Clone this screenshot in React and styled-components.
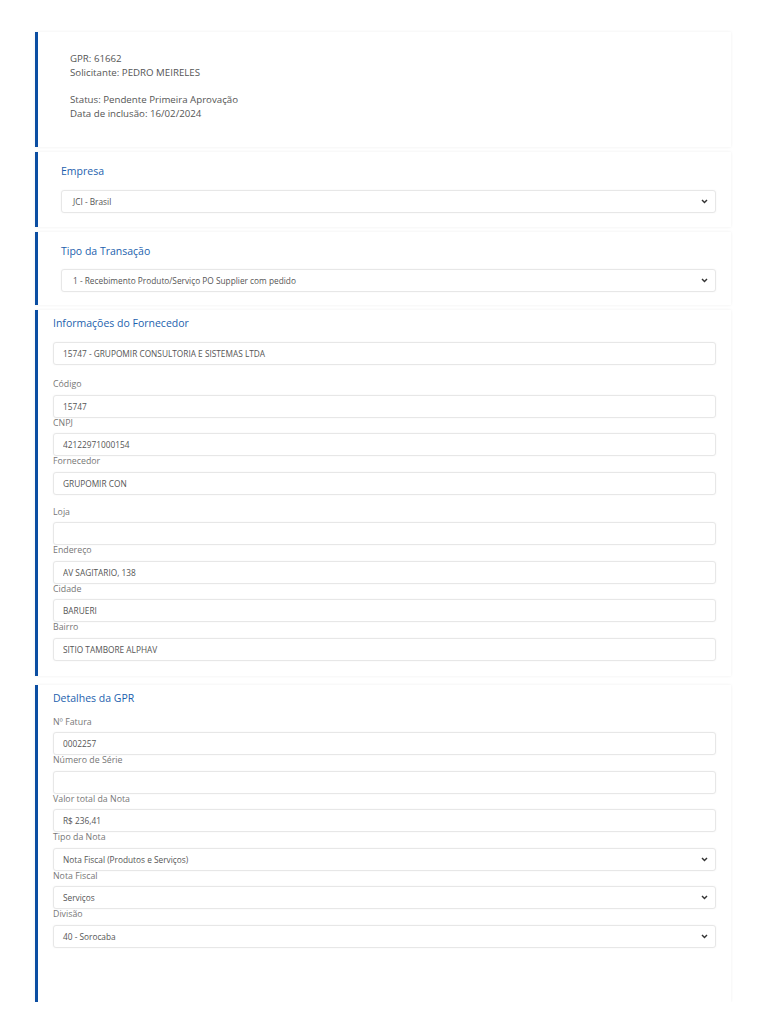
import styled, { createGlobalStyle } from "styled-components"

const GlobalStyle = createGlobalStyle`
  body {
    margin: 0;
    background: #ffffff;
    font-family: "Open Sans", "Noto Sans", sans-serif;
    color: #444;
  }
`;

const Page = styled.div`
  padding: 32px 37px 0 35px;
  display: flex;
  flex-direction: column;
  gap: 5px;
`;

const Card = styled.section`
  background: #fff;
  border-left: 3px solid #0b4ea2;
  box-shadow: 0 0 3px rgba(0, 0, 0, 0.07);
  padding: ${props => props.pad};
  margin-top: ${props => props.lift || 0}px;
  display: flex;
  flex-direction: column;
`;

const InfoLine = styled.div`
  font-size: 9.7px;
  line-height: 14px;
  color: #555;
  margin-top: ${props => props.gap || 0}px;
`;

const Title = styled.h4`
  margin: 0 0 ${props => props.after}px;
  font-size: 10.5px;
  line-height: 14px;
  font-weight: 400;
  color: #1d5fae;
`;

const Field = styled.div`
  display: flex;
  flex-direction: column;
  margin-top: ${props => props.spaced || 0}px;
`;

const Label = styled.label`
  font-size: 8.8px;
  line-height: 10.5px;
  color: #777;
  margin-bottom: 5px;
`;

const Input = styled.input`
  height: 23px;
  box-sizing: border-box;
  border: 1px solid #e7e7e7;
  border-radius: 3px;
  box-shadow: 0 0 2px rgba(0, 0, 0, 0.05);
  padding: 0 9px;
  font-family: "Open Sans", "Noto Sans", sans-serif;
  font-size: 8.3px;
  color: #555;
  background: #fff;
  outline: none;
`;

const Select = styled.div`
  height: 23px;
  box-sizing: border-box;
  border: 1px solid #e7e7e7;
  border-radius: 3px;
  box-shadow: 0 0 2px rgba(0, 0, 0, 0.05);
  padding: 0 7px 0 ${props => props.indent || 9}px;
  display: flex;
  align-items: center;
  justify-content: space-between;
  font-size: 8.3px;
  color: #555;
  background: #fff;
`;

const Chevron = () => (
  <svg width="7" height="5" viewBox="0 0 7 5">
    <path d="M1 1 L3.5 3.6 L6 1" fill="none" stroke="#333" strokeWidth="1.4" />
  </svg>
);

function SelectBox({ value, indent }) {
  return (
    <Select indent={indent}>
      <span>{value}</span>
      <Chevron />
    </Select>
  );
}

function TextField({ label, value, spaced }) {
  return (
    <Field spaced={spaced}>
      {label && <Label>{label}</Label>}
      <Input readOnly value={value} />
    </Field>
  );
}

function SelectField({ label, value }) {
  return (
    <Field>
      <Label>{label}</Label>
      <SelectBox value={value} />
    </Field>
  );
}

export default function App() {
  return (
    <>
      <GlobalStyle />
      <Page>
        <Card pad="20px 15px 26px 32px">
          <InfoLine>GPR: 61662</InfoLine>
          <InfoLine>Solicitante: PEDRO MEIRELES</InfoLine>
          <InfoLine gap={13}>Status: Pendente Primeira Aprovação</InfoLine>
          <InfoLine>Data de inclusão: 16/02/2024</InfoLine>
        </Card>

        <Card pad="12px 15px 14px 23px">
          <Title after={12}>Empresa</Title>
          <SelectBox value="JCI - Brasil" indent={11} />
        </Card>

        <Card pad="12px 15px 13px 23px">
          <Title after={11}>Tipo da Transação</Title>
          <SelectBox value="1 - Recebimento Produto/Serviço PO Supplier com pedido" indent={11} />
        </Card>

        <Card pad="6px 15px 15px 15px">
          <Title after={12}>Informações do Fornecedor</Title>
          <TextField value="15747 - GRUPOMIR CONSULTORIA E SISTEMAS LTDA" />
          <TextField spaced={14} label="Código" value="15747" />
          <TextField label="CNPJ" value="42122971000154" />
          <TextField label="Fornecedor" value="GRUPOMIR CON" />
          <TextField spaced={12} label="Loja" value="" />
          <TextField label="Endereço" value="AV SAGITARIO, 138" />
          <TextField label="Cidade" value="BARUERI" />
          <TextField label="Bairro" value="SITIO TAMBORE ALPHAV" />
        </Card>

        <Card lift={4} pad="6px 15px 54px 15px">
          <Title after={12}>Detalhes da GPR</Title>
          <TextField label="Nº Fatura" value="0002257" />
          <TextField label="Número de Série" value="" />
          <TextField label="Valor total da Nota" value="R$ 236,41" />
          <SelectField label="Tipo da Nota" value="Nota Fiscal (Produtos e Serviços)" />
          <SelectField label="Nota Fiscal" value="Serviços" />
          <SelectField label="Divisão" value="40 - Sorocaba" />
        </Card>
      </Page>
    </>
  );
}
